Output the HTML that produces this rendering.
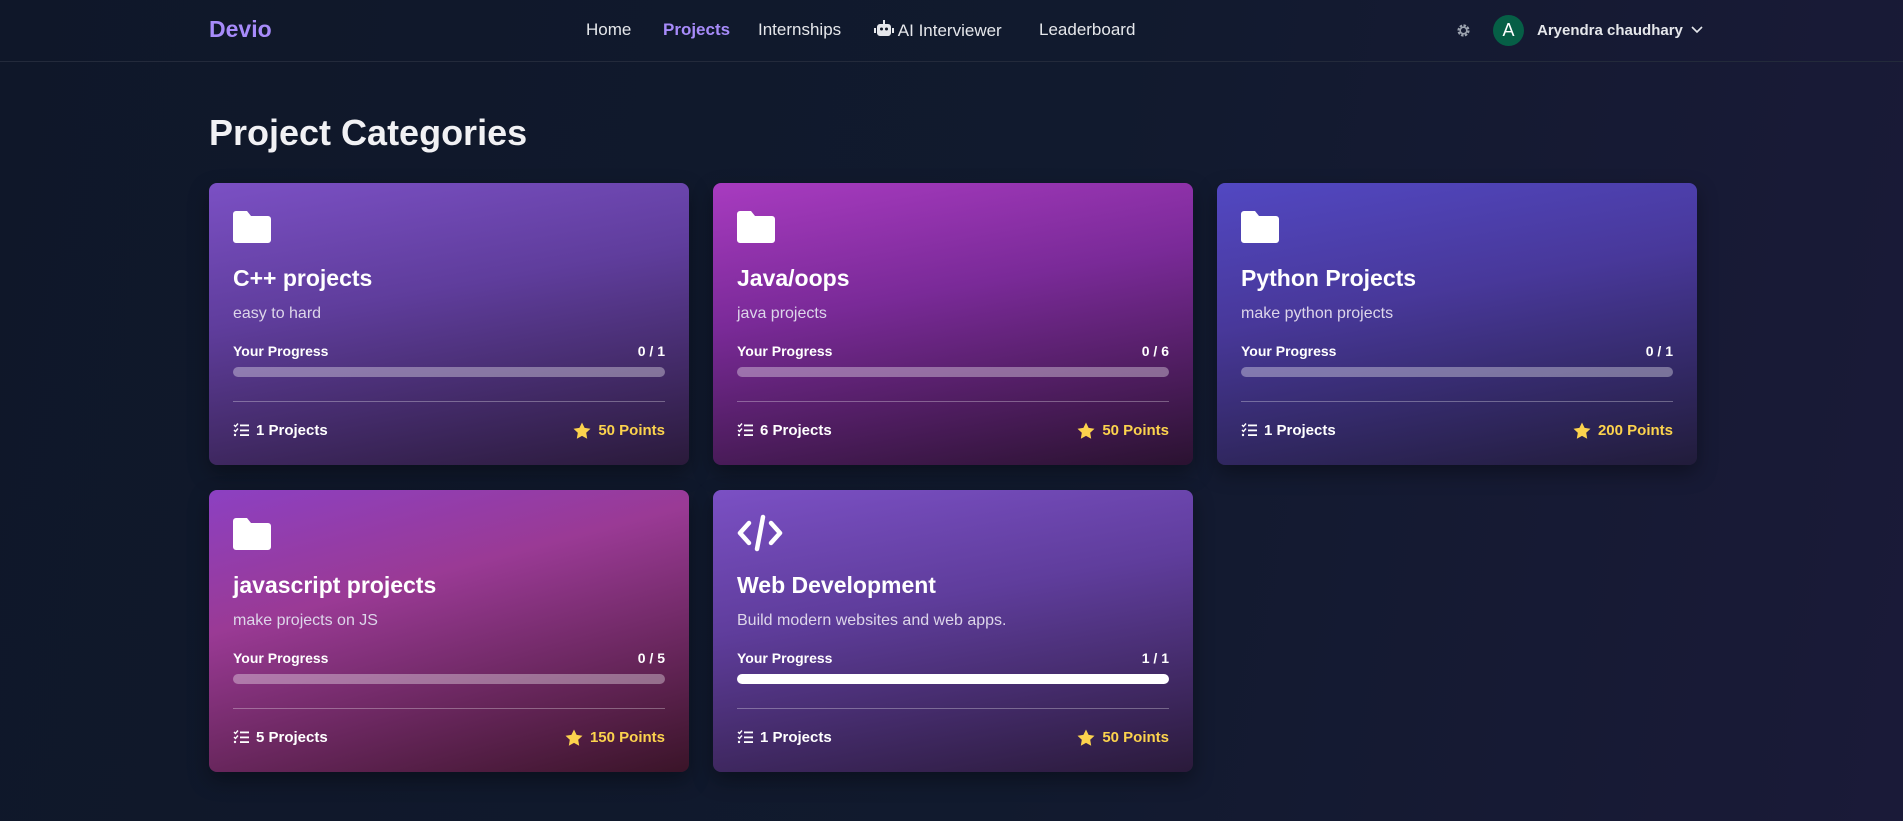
<!DOCTYPE html>
<html><head><meta charset="utf-8"><style>
*{margin:0;padding:0;box-sizing:border-box}
body{width:1903px;height:821px;overflow:hidden;font-family:"Liberation Sans",sans-serif;color:#fff;
background:linear-gradient(100deg,#0f1729 0%,#111a2e 55%,#1a1a38 100%);position:relative}
.nav{position:absolute;left:0;top:0;width:1903px;height:62px;border-bottom:1px solid #232a3b}
.logo{position:absolute;left:209px;top:16px;font-size:23px;font-weight:bold;color:#a78bfa}
.links{position:absolute;top:20px;font-size:17px;color:#e5e7eb}
.links span{position:absolute;white-space:nowrap}
h1{position:absolute;left:209px;top:112px;font-size:36px;font-weight:bold;color:#f1f1f4}
.card{position:absolute;width:480px;height:282px;border-radius:8px;padding:24px;box-shadow:0 8px 20px rgba(0,0,0,.35)}
.card .ic{position:absolute;left:24px;top:28px}
.card .t{position:absolute;left:24px;top:82px;font-size:23px;font-weight:bold}
.card .d{position:absolute;left:24px;top:122px;font-size:16px;color:#ddd6ea}
.card .pl{position:absolute;left:24px;top:160px;font-size:14px;font-weight:bold;width:432px}
.card .pl b{position:absolute;right:0}
.card .bar{position:absolute;left:24px;top:184px;width:432px;height:10px;border-radius:5px;background:rgba(255,255,255,.35)}
.card .hr{position:absolute;left:24px;top:218px;width:432px;height:1px;background:rgba(255,255,255,.3)}
.card .f{position:absolute;left:24px;top:236px;width:432px;height:22px;font-size:15px;font-weight:bold;display:flex;justify-content:space-between;align-items:center}
.card .f span{display:flex;align-items:center}
.card .f svg{margin-right:7px}
.card .f .r{color:#fcd34d}
</style></head><body>
<div class="nav">
<div class="logo">Devio</div>
<div class="links">
<span style="left:586px">Home</span>
<span style="left:663px;color:#a78bfa;font-weight:bold">Projects</span>
<span style="left:758px">Internships</span>
<span style="left:874px"><svg width="20" height="18" viewBox="0 0 20 18" style="vertical-align:-2px"><rect x="3" y="4" width="14" height="12" rx="3" fill="#e5e7eb"/><rect x="9" y="0" width="2" height="4" fill="#e5e7eb"/><rect x="0" y="8" width="2" height="5" fill="#e5e7eb"/><rect x="18" y="8" width="2" height="5" fill="#e5e7eb"/><circle cx="7.5" cy="9" r="1.5" fill="#111827"/><circle cx="12.5" cy="9" r="1.5" fill="#111827"/></svg> AI Interviewer</span>
<span style="left:1039px">Leaderboard</span>
</div>
<svg style="position:absolute;left:1456px;top:23px" width="15" height="15" viewBox="0 0 16 16"><circle cx="8" cy="8" r="5" fill="none" stroke="#9ca3af" stroke-width="3" stroke-dasharray="2.5 1.4"/><circle cx="8" cy="8" r="3.5" fill="none" stroke="#9ca3af" stroke-width="1.6"/></svg>
<div style="position:absolute;left:1493px;top:15px;width:31px;height:31px;border-radius:50%;background:#065f46;text-align:center;line-height:31px;font-size:18px">A</div>
<div style="position:absolute;left:1537px;top:22px;font-size:15px;font-weight:bold;color:#e5e7eb">Aryendra chaudhary <svg width="12" height="8" viewBox="0 0 12 8" style="margin-left:4px;vertical-align:1px"><path d="M1 1l5 5 5-5" stroke="#e5e7eb" stroke-width="1.6" fill="none"/></svg></div>
</div>
<h1>Project Categories</h1>

<svg width="0" height="0" style="position:absolute"><defs>
<g id="ls"><path d="M1 2l1.5 1.5L5 0.5M1 7l1.5 1.5L5 5.5" stroke="#fff" stroke-width="1.4" fill="none"/><circle cx="2" cy="12" r="1.2" fill="#fff"/><rect x="7" y="1.5" width="9" height="1.8" fill="#fff"/><rect x="7" y="6.5" width="9" height="1.8" fill="#fff"/><rect x="7" y="11.2" width="9" height="1.8" fill="#fff"/></g>
<path id="st" d="M9 0.5l2.6 5.4 5.9.8-4.3 4.1 1 5.9L9 13.9l-5.2 2.8 1-5.9L.5 6.7l5.9-.8z" fill="#fcd34d"/>
</defs></svg>

<div class="card" style="left:209px;top:183px;background:linear-gradient(170deg,#7b50c4 0%,#5f3d9c 40%,#2a1a3a 100%)">
<svg class="ic" width="38" height="32" viewBox="0 0 38 32"><path d="M3 0h11l4 5h17a3 3 0 0 1 3 3v21a3 3 0 0 1-3 3H3a3 3 0 0 1-3-3V3a3 3 0 0 1 3-3z" fill="#fff"/></svg>
<div class="t">C++ projects</div><div class="d">easy to hard</div>
<div class="pl">Your Progress<b>0 / 1</b></div><div class="bar"></div><div class="hr"></div>
<div class="f"><span><svg width="16" height="14"><use href="#ls"/></svg>1 Projects</span><span class="r"><svg width="18" height="17"><use href="#st"/></svg>50 Points</span></div></div>

<div class="card" style="left:713px;top:183px;background:linear-gradient(170deg,#a83bc0 0%,#7a2a98 40%,#2a1230 100%)">
<svg class="ic" width="38" height="32" viewBox="0 0 38 32"><path d="M3 0h11l4 5h17a3 3 0 0 1 3 3v21a3 3 0 0 1-3 3H3a3 3 0 0 1-3-3V3a3 3 0 0 1 3-3z" fill="#fff"/></svg>
<div class="t">Java/oops</div><div class="d">java projects</div>
<div class="pl">Your Progress<b>0 / 6</b></div><div class="bar"></div><div class="hr"></div>
<div class="f"><span><svg width="16" height="14"><use href="#ls"/></svg>6 Projects</span><span class="r"><svg width="18" height="17"><use href="#st"/></svg>50 Points</span></div></div>

<div class="card" style="left:1217px;top:183px;background:linear-gradient(170deg,#5248c2 0%,#48389a 40%,#211c3a 100%)">
<svg class="ic" width="38" height="32" viewBox="0 0 38 32"><path d="M3 0h11l4 5h17a3 3 0 0 1 3 3v21a3 3 0 0 1-3 3H3a3 3 0 0 1-3-3V3a3 3 0 0 1 3-3z" fill="#fff"/></svg>
<div class="t">Python Projects</div><div class="d">make python projects</div>
<div class="pl">Your Progress<b>0 / 1</b></div><div class="bar"></div><div class="hr"></div>
<div class="f"><span><svg width="16" height="14"><use href="#ls"/></svg>1 Projects</span><span class="r"><svg width="18" height="17"><use href="#st"/></svg>200 Points</span></div></div>

<div class="card" style="left:209px;top:490px;background:linear-gradient(165deg,#8c40c2 0%,#9a3a95 35%,#3a1428 100%)">
<svg class="ic" width="38" height="32" viewBox="0 0 38 32"><path d="M3 0h11l4 5h17a3 3 0 0 1 3 3v21a3 3 0 0 1-3 3H3a3 3 0 0 1-3-3V3a3 3 0 0 1 3-3z" fill="#fff"/></svg>
<div class="t">javascript projects</div><div class="d">make projects on JS</div>
<div class="pl">Your Progress<b>0 / 5</b></div><div class="bar"></div><div class="hr"></div>
<div class="f"><span><svg width="16" height="14"><use href="#ls"/></svg>5 Projects</span><span class="r"><svg width="18" height="17"><use href="#st"/></svg>150 Points</span></div></div>

<div class="card" style="left:713px;top:490px;background:linear-gradient(170deg,#7b50c4 0%,#5f3d9c 40%,#2a1a3a 100%)">
<svg class="ic" width="46" height="38" viewBox="0 0 46 38" style="top:24px"><path d="M12 9L3 19l9 10M34 9l9 10-9 10M26 3L20 35" stroke="#fff" stroke-width="4.5" fill="none" stroke-linecap="round" stroke-linejoin="round"/></svg>
<div class="t">Web Development</div><div class="d">Build modern websites and web apps.</div>
<div class="pl">Your Progress<b>1 / 1</b></div><div class="bar" style="background:#fff"></div><div class="hr"></div>
<div class="f"><span><svg width="16" height="14"><use href="#ls"/></svg>1 Projects</span><span class="r"><svg width="18" height="17"><use href="#st"/></svg>50 Points</span></div></div>
</body></html>
